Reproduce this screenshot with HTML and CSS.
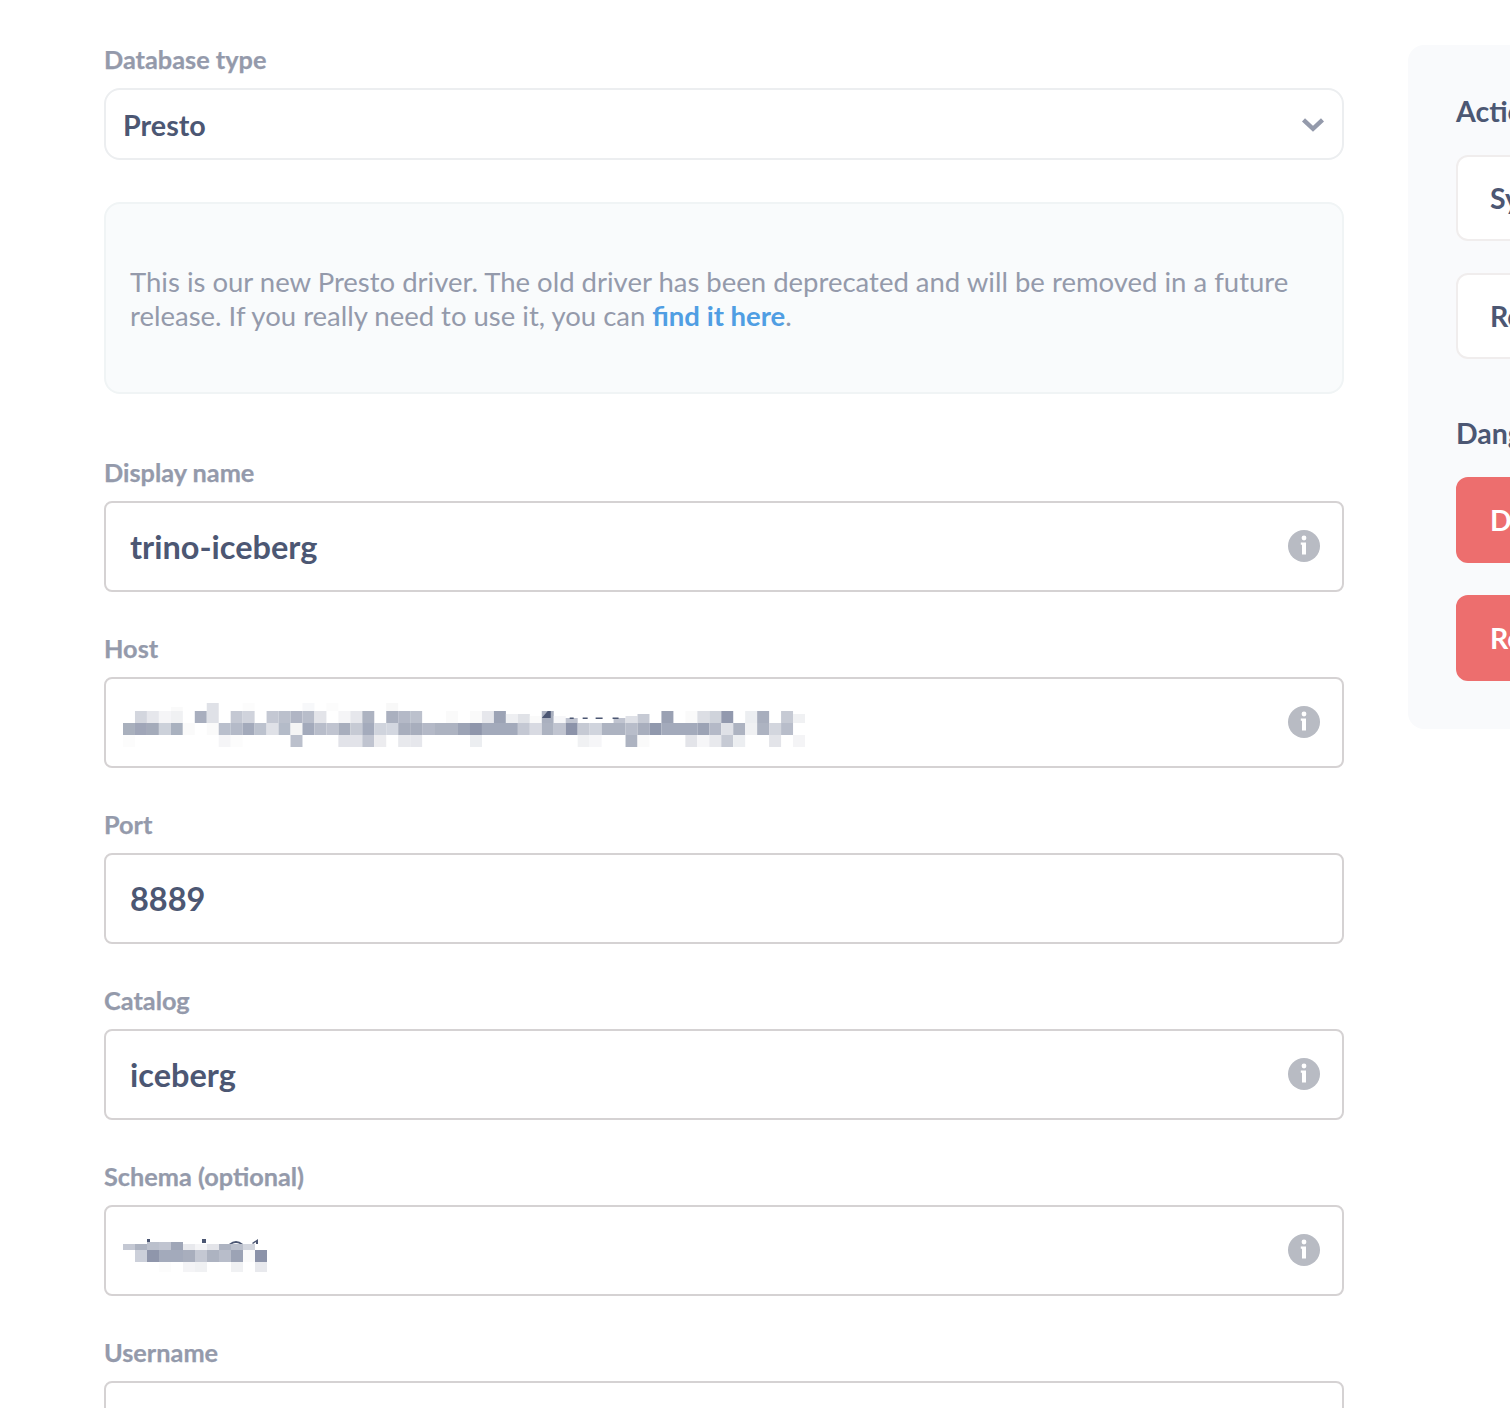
FILE: index.html
```html
<!DOCTYPE html>
<html lang="en">
<head>
<meta charset="utf-8">
<title>Database</title>
<link rel="stylesheet" href="styles.css">
</head>
<body>
<div class="page">
  <main class="form">
    <div class="select-field">
      <label class="label">Database type</label>
      <div class="select">
        <span>Presto</span>
        <svg class="chevron" width="24" height="16" viewBox="0 0 24 16"><path d="M2.500 2.800l9.500 9 9.500-9" fill="none" stroke="#949aab" stroke-width="4.400"/></svg>
      </div>
    </div>
    <div class="notice">
      <p>This is our new Presto driver. The old driver has been deprecated and will be removed in a future release. If you really need to use it, you can <a href="#">find it here</a>.</p>
    </div>
    <div class="fields">
      <div class="field">
        <label class="label">Display name</label>
        <div class="input"><span>trino-iceberg</span>
          <svg class="info" width="32" height="32" viewBox="0 0 32 32"><circle cx="16" cy="16" r="16" fill="#b8bbc3"/><circle cx="16" cy="8" r="2.400" fill="#fff"/><path d="M12.800 12.500h5.200v12h-4v-9.800h-1.200z" fill="#fff"/></svg>
        </div>
      </div>
      <div class="field">
        <label class="label">Host</label>
        <div class="input">
          <svg class="blur blur-host" width="688" height="60" viewBox="123 699 690 60" preserveAspectRatio="none" aria-hidden="true">
            <g>
              <rect x="123" y="723" width="12" height="12" fill="#a9b0bd"/><rect x="135" y="723" width="12" height="12" fill="#a0a6b8"/><rect x="147" y="723" width="12" height="12" fill="#a4abba"/><rect x="159" y="723" width="12" height="12" fill="#ccd1da"/><rect x="171" y="723" width="12" height="12" fill="#a9b1bf"/><rect x="183" y="723" width="12" height="12" fill="#fafafa"/><rect x="207" y="723" width="12" height="12" fill="#fafafa"/><rect x="219" y="723" width="12" height="12" fill="#b9bfcc"/><rect x="231" y="723" width="12" height="12" fill="#b4bac8"/><rect x="243" y="723" width="12" height="12" fill="#a3aabb"/><rect x="255" y="723" width="12" height="12" fill="#bcc2ce"/><rect x="267" y="723" width="12" height="12" fill="#dfe1e7"/><rect x="279" y="723" width="12" height="12" fill="#b4bbc8"/><rect x="291" y="723" width="12" height="12" fill="#f5f5f5"/><rect x="303" y="723" width="12" height="12" fill="#a3aabb"/><rect x="315" y="723" width="12" height="12" fill="#b8bdca"/><rect x="327" y="723" width="12" height="12" fill="#c0c4d0"/><rect x="339" y="723" width="12" height="12" fill="#a8aebd"/><rect x="351" y="723" width="12" height="12" fill="#c6cad4"/><rect x="363" y="723" width="12" height="12" fill="#a4abbc"/><rect x="375" y="723" width="12" height="12" fill="#d0d4dd"/><rect x="387" y="723" width="12" height="12" fill="#d3d7e0"/><rect x="399" y="723" width="12" height="12" fill="#a8aebd"/><rect x="411" y="723" width="12" height="12" fill="#a8aebd"/><rect x="423" y="723" width="12" height="12" fill="#b4b9c7"/><rect x="435" y="723" width="36" height="12" fill="#adb3c1"/>
              <rect x="459" y="723" width="12" height="12" fill="#9ca3b5"/><rect x="471" y="723" width="12" height="12" fill="#8f96ab"/><rect x="483" y="723" width="36" height="12" fill="#a3aabb"/><rect x="519" y="723" width="12" height="12" fill="#c4c8d3"/><rect x="531" y="723" width="12" height="12" fill="#d8dae2"/><rect x="543" y="723" width="12" height="12" fill="#adb3c1"/><rect x="555" y="723" width="12" height="12" fill="#c0c4d0"/><rect x="567" y="723" width="12" height="12" fill="#8c93a9"/><rect x="579" y="723" width="12" height="12" fill="#c6cad4"/><rect x="591" y="723" width="12" height="12" fill="#d0d4dd"/><rect x="603" y="723" width="24" height="12" fill="#adb3c1"/><rect x="627" y="723" width="12" height="12" fill="#b8bdca"/><rect x="639" y="723" width="12" height="12" fill="#a8aebd"/><rect x="651" y="723" width="12" height="12" fill="#9199ad"/><rect x="663" y="723" width="36" height="12" fill="#a3aabb"/><rect x="699" y="723" width="12" height="12" fill="#9ca3b5"/><rect x="711" y="723" width="12" height="12" fill="#b4b9c7"/><rect x="723" y="723" width="12" height="12" fill="#dfe1e7"/><rect x="735" y="723" width="12" height="12" fill="#adb3c1"/><rect x="747" y="723" width="12" height="12" fill="#f0f1f3"/><rect x="759" y="723" width="12" height="12" fill="#adb3c1"/><rect x="771" y="723" width="12" height="12" fill="#d3d6de"/><rect x="783" y="723" width="12" height="12" fill="#b8bdca"/>
            </g>
            <g>
              <rect x="135" y="711" width="12" height="12" fill="#d3d6de"/><rect x="147" y="711" width="12" height="12" fill="#e6e7ec"/><rect x="159" y="711" width="12" height="12" fill="#f5f5f7"/><rect x="171" y="711" width="12" height="12" fill="#f0f1f3"/><rect x="195" y="711" width="12" height="12" fill="#a8aebe"/><rect x="207" y="711" width="12" height="12" fill="#dfe1e7"/><rect x="231" y="711" width="12" height="12" fill="#c4c8d3"/><rect x="243" y="711" width="12" height="12" fill="#d0d3dc"/><rect x="267" y="711" width="12" height="12" fill="#c4c8d3"/><rect x="279" y="711" width="12" height="12" fill="#bbc0cc"/><rect x="291" y="711" width="12" height="12" fill="#b0b5c4"/><rect x="303" y="711" width="12" height="12" fill="#b8bdca"/><rect x="315" y="711" width="12" height="12" fill="#e3e4e9"/><rect x="339" y="711" width="12" height="12" fill="#f5f5f7"/><rect x="351" y="711" width="12" height="12" fill="#e6e7ec"/><rect x="363" y="711" width="12" height="12" fill="#adb3c1"/><rect x="387" y="711" width="12" height="12" fill="#aab0bf"/><rect x="399" y="711" width="12" height="12" fill="#b4b9c7"/><rect x="411" y="711" width="12" height="12" fill="#bcc1cd"/><rect x="447" y="711" width="12" height="12" fill="#fafafa"/><rect x="471" y="711" width="12" height="12" fill="#fafafa"/><rect x="483" y="711" width="12" height="12" fill="#e6e7ec"/><rect x="495" y="711" width="12" height="12" fill="#9ca3b5"/><rect x="507" y="714" width="12" height="9" fill="#eeeff2"/><rect x="519" y="714" width="12" height="9" fill="#e0e2e7"/><rect x="531" y="716" width="12" height="7" fill="#fafafa"/><rect x="543" y="711" width="12" height="12" fill="#aab0bf"/><rect x="555" y="716" width="12" height="7" fill="#f7f7f9"/><rect x="567" y="718" width="12" height="5" fill="#c0c4d0"/><rect x="615" y="718" width="12" height="5" fill="#c0c4d0"/><rect x="627" y="716" width="12" height="7" fill="#dfe1e7"/><rect x="639" y="714" width="12" height="9" fill="#c6cad4"/><rect x="663" y="711" width="12" height="12" fill="#9aa1b3"/><rect x="687" y="711" width="12" height="12" fill="#fafafa"/><rect x="699" y="711" width="12" height="12" fill="#dcdee4"/><rect x="711" y="711" width="12" height="12" fill="#cfd3db"/><rect x="723" y="711" width="12" height="12" fill="#9299ae"/><rect x="747" y="711" width="12" height="12" fill="#eceef1"/><rect x="759" y="711" width="12" height="12" fill="#a8aebd"/><rect x="783" y="711" width="12" height="12" fill="#c6cad4"/><rect x="795" y="714" width="12" height="9" fill="#f0f1f3"/>
            </g>
            <g>
              <rect x="171" y="707" width="12" height="4" fill="#fafafa"/><rect x="207" y="703" width="12" height="8" fill="#dfe1e7"/><rect x="243" y="703" width="12" height="8" fill="#fcfcfc"/><rect x="303" y="703" width="12" height="8" fill="#f7f8fa"/><rect x="327" y="703" width="12" height="8" fill="#fcfcfc"/><rect x="387" y="703" width="12" height="8" fill="#f8f8f8"/>
            </g>
            <g>
              <rect x="123" y="735" width="12" height="12" fill="#fcfcfc"/><rect x="219" y="735" width="12" height="12" fill="#f5f5f7"/><rect x="231" y="735" width="12" height="12" fill="#fcfcfc"/><rect x="291" y="735" width="12" height="12" fill="#bbc0cc"/><rect x="339" y="735" width="24" height="12" fill="#e2e3e9"/><rect x="363" y="735" width="12" height="12" fill="#c0c4d0"/><rect x="375" y="735" width="12" height="12" fill="#ececef"/><rect x="399" y="735" width="12" height="12" fill="#e8e9ed"/><rect x="411" y="735" width="12" height="12" fill="#e6e7ec"/><rect x="471" y="735" width="12" height="12" fill="#eceef1"/><rect x="579" y="735" width="12" height="12" fill="#f0f1f3"/><rect x="591" y="735" width="12" height="12" fill="#f6f6f8"/><rect x="627" y="735" width="12" height="12" fill="#adb3c1"/><rect x="639" y="735" width="12" height="12" fill="#fafafa"/><rect x="687" y="735" width="12" height="12" fill="#e3e4e9"/><rect x="699" y="735" width="12" height="12" fill="#f6f6f8"/><rect x="711" y="735" width="12" height="12" fill="#e8e9ed"/><rect x="723" y="735" width="12" height="12" fill="#c6cad4"/><rect x="735" y="735" width="12" height="12" fill="#eceef1"/><rect x="771" y="735" width="12" height="12" fill="#e3e4e9"/><rect x="795" y="735" width="12" height="12" fill="#f4f4f6"/>
            </g>
            <path d="M543 718l6-7h3v7zM571 717.500h4v1.500h-4zM584 717.500h5v1.500h-5zM597 717.500h7v1.500h-7zM614 717.500h6v1.500h-6z" fill="#4c5773"/>
          </svg>
          <svg class="info" width="32" height="32" viewBox="0 0 32 32"><circle cx="16" cy="16" r="16" fill="#b8bbc3"/><circle cx="16" cy="8" r="2.400" fill="#fff"/><path d="M12.800 12.500h5.200v12h-4v-9.800h-1.200z" fill="#fff"/></svg>
        </div>
      </div>
      <div class="field">
        <label class="label">Port</label>
        <div class="input"><span>8889</span></div>
      </div>
      <div class="field">
        <label class="label">Catalog</label>
        <div class="input"><span>iceberg</span>
          <svg class="info" width="32" height="32" viewBox="0 0 32 32"><circle cx="16" cy="16" r="16" fill="#b8bbc3"/><circle cx="16" cy="8" r="2.400" fill="#fff"/><path d="M12.800 12.500h5.200v12h-4v-9.800h-1.200z" fill="#fff"/></svg>
        </div>
      </div>
      <div class="field">
        <label class="label">Schema (optional)</label>
        <div class="input">
          <svg class="blur blur-schema" width="150" height="36" viewBox="123 1238 150 36" aria-hidden="true">
            <rect x="123" y="1244" width="12" height="6" fill="#c4c8d3"/><rect x="135" y="1244" width="12" height="6" fill="#adb3c1"/><rect x="147" y="1242" width="12" height="8" fill="#bbc0cc"/><rect x="159" y="1242" width="12" height="8" fill="#c0c4d0"/><rect x="171" y="1242" width="12" height="8" fill="#9fa6b7"/><rect x="183" y="1244" width="12" height="6" fill="#e8e9ed"/><rect x="195" y="1244" width="12" height="6" fill="#f4f4f6"/><rect x="207" y="1244" width="12" height="6" fill="#e3e4e9"/><rect x="219" y="1244" width="12" height="6" fill="#adb3c1"/><rect x="231" y="1244" width="12" height="6" fill="#bbc0cc"/><rect x="243" y="1244" width="12" height="6" fill="#d3d6de"/>
            <rect x="135" y="1250" width="12" height="12" fill="#ccd0da"/><rect x="147" y="1250" width="12" height="12" fill="#8f96ab"/><rect x="159" y="1250" width="24" height="12" fill="#a3aabb"/><rect x="183" y="1250" width="12" height="12" fill="#a8aebd"/><rect x="195" y="1250" width="12" height="12" fill="#c4c8d3"/><rect x="207" y="1250" width="12" height="12" fill="#adb3c1"/><rect x="219" y="1250" width="12" height="12" fill="#b8bdca"/><rect x="231" y="1250" width="12" height="12" fill="#9ca3b5"/><rect x="243" y="1250" width="12" height="12" fill="#fafafa"/><rect x="255" y="1250" width="12" height="12" fill="#8c93a9"/>
            <rect x="159" y="1262" width="12" height="10" fill="#fcfcfc"/><rect x="183" y="1262" width="12" height="10" fill="#f4f4f6"/><rect x="195" y="1262" width="12" height="10" fill="#f0f1f3"/><rect x="231" y="1262" width="12" height="10" fill="#f0f1f3"/><rect x="255" y="1262" width="12" height="10" fill="#e8e9ed"/>
            <path d="M147 1239h3v3h-3zM202 1239h4v4h-4zM229 1244q7-6 14 0h-3q-4-2-8 0zM252 1243l6-4v5h-2v-2l-3 2z" fill="#4c5773"/>
          </svg>
          <svg class="info" width="32" height="32" viewBox="0 0 32 32"><circle cx="16" cy="16" r="16" fill="#b8bbc3"/><circle cx="16" cy="8" r="2.400" fill="#fff"/><path d="M12.800 12.500h5.200v12h-4v-9.800h-1.200z" fill="#fff"/></svg>
        </div>
      </div>
      <div class="field">
        <label class="label">Username</label>
        <div class="input"></div>
      </div>
    </div>
  </main>
  <aside class="side">
    <h3 class="side-title">Actions</h3>
    <div class="btn-stack">
      <button class="btn">Sync database schema now</button>
      <button class="btn">Re-scan field values now</button>
    </div>
    <h3 class="side-title danger-title">Danger Zone</h3>
    <div class="btn-stack">
      <button class="btn btn-danger">Discard saved field values</button>
      <button class="btn btn-danger">Remove this database</button>
    </div>
  </aside>
</div>
</body>
</html>
```
FILE: styles.css
```css
* { box-sizing: border-box; }
html, body { margin: 0; height: 1408px; overflow: hidden; background: #fff; }
body { font-family: Lato, "Liberation Sans", sans-serif; color: #4c5773; }
.page { display: flex; align-items: flex-start; gap: 64px; padding-left: 104px; width: 2200px; }
.form { width: 1240px; flex: none; padding-top: 45px; }
.label { display: block; height: 30px; line-height: 28px; font-size: 25.300px; font-weight: 700; color: #949aab; margin-bottom: 13px; -webkit-text-stroke: 0.25px #949aab; }
.select { height: 72px; border: 2px solid #eceef0; border-radius: 16px; display: flex; align-items: center; justify-content: space-between; padding: 1px 17px 0 17px; font-size: 28.700px; font-weight: 700; color: #4c5773; }
.notice { margin-top: 42px; height: 192px; background: #f9fbfc; border: 2px solid #f0f4f5; border-radius: 16px; padding: 2px 24px 0; display: flex; align-items: center; }
.notice p { margin: 0; font-size: 27.500px; line-height: 34px; color: #949aab; }
.notice a { color: #509ee3; font-weight: 700; text-decoration: none; }
.fields { margin-top: 64px; display: flex; flex-direction: column; gap: 42px; }
.input { height: 91px; border: 2px solid #d5d2d3; border-radius: 8px; display: flex; align-items: center; justify-content: space-between; padding: 0 22px 0 24px; font-size: 32.500px; font-weight: 700; color: #4c5773; background: #fff; position: relative; }
.input .info { position: absolute; right: 22px; top: 27px; }
.blur { position: absolute; left: 17px; }
.blur-host { top: 20px; }
.blur-schema { top: 31px; }
.side { width: 700px; flex: none; margin-top: 45px; height: 684px; background: #f9fafc; border-radius: 16px; padding: 48px; }
.side-title { margin: 0; font-size: 28.500px; line-height: 36px; font-weight: 700; color: #4c5773; }
.danger-title { margin-top: 56px; }
.btn-stack { display: flex; flex-direction: column; gap: 32px; margin-top: 26px; align-items: flex-start; }
.btn { width: 600px; height: 86px; border: 2px solid #f0eded; border-radius: 12px; background: #fff; font-family: inherit; font-size: 28.500px; font-weight: 700; color: #4c5773; text-align: left; padding: 0 32px; }
.btn-danger { background: #ed6e6e; border-color: #ed6e6e; color: #fff; }
```
